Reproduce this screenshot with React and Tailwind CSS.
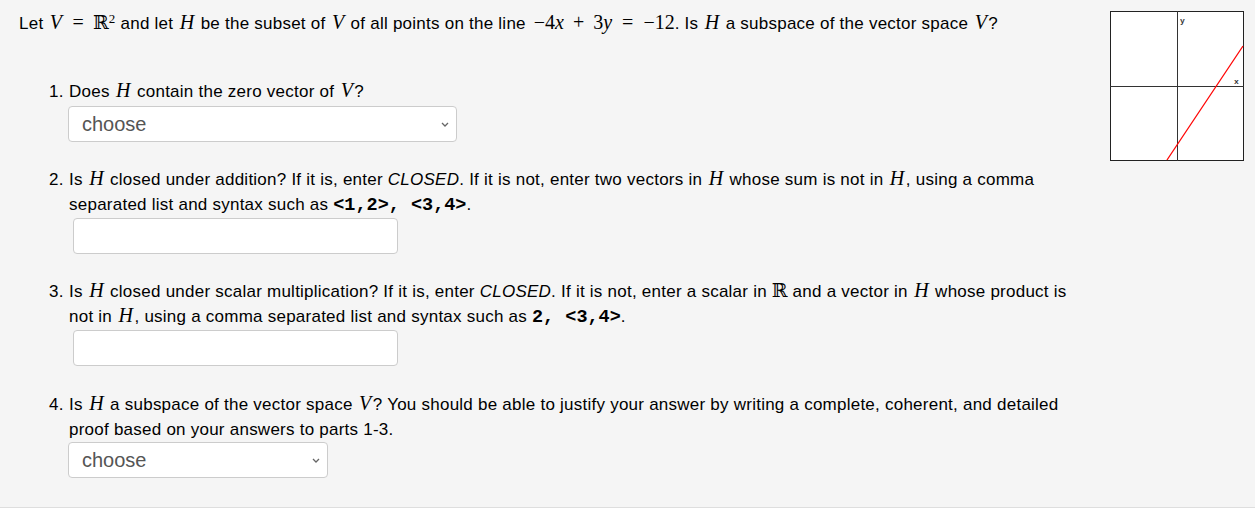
import React from 'react';

const serif = { fontFamily: '"Liberation Serif", "DejaVu Serif", serif' };

const M = ({ children }) => (
  <span className="italic text-[20px] leading-[0] px-[1.5px] tracking-normal" style={serif}>{children}</span>
);

const R = () => (
  <span className="text-[19px] leading-[0] tracking-normal" style={{ fontFamily: '"DejaVu Serif", serif' }}>ℝ</span>
);

const Code = ({ children }) => (
  <span className="text-[18.5px] leading-[0] font-semibold whitespace-pre tracking-normal" style={{ fontFamily: '"Liberation Mono", monospace' }}>{children}</span>
);

const Chevron = () => (
  <svg width="10" height="10" viewBox="0 0 10 10" className="text-[#666]">
    <path d="M2 4 L5 7 L8 4" fill="none" stroke="currentColor" strokeWidth="1.3" />
  </svg>
);

const Select = ({ width }) => (
  <div className={`${width} h-[36px] bg-white border border-[#ccc] rounded-[4px] flex items-center justify-between pl-[13px] pr-[6px]`}>
    <span className="text-[20px] text-[#555] tracking-normal">choose</span>
    <Chevron />
  </div>
);

const Input = () => (
  <div className="w-[325px] h-[36px] ml-[4px] mt-[1px] bg-white border border-[#ccc] rounded-[4px]" />
);

const Item = ({ n, children, field }) => (
  <div className="flex">
    <span className="w-[20px] shrink-0">{n}.</span>
    <div className="flex-1">
      <div className="whitespace-nowrap">{children}</div>
      {field}
    </div>
  </div>
);

const Graph = () => (
  <svg width="134" height="150" viewBox="0 0 134 150" className="shrink-0">
    <rect x="0.5" y="0.5" width="133" height="149" fill="white" stroke="#222" />
    <line x1="67.5" y1="0" x2="67.5" y2="150" stroke="#333" />
    <line x1="0" y1="75.5" x2="134" y2="75.5" stroke="#333" />
    <line x1="57" y1="149" x2="133" y2="35" stroke="red" strokeWidth="1.3" />
    <text x="70" y="12" fontSize="8" fontWeight="bold" fontFamily="Liberation Mono" fill="#333">y</text>
    <text x="124" y="73" fontSize="8" fontWeight="bold" fontFamily="Liberation Mono" fill="#333">x</text>
  </svg>
);

export default function App() {
  return (
    <div className="h-[508px] bg-[#f5f5f5] border-b border-[#dedede] text-black text-[17px] tracking-[0.24px] leading-[25px]" style={{ fontFamily: '"Liberation Sans", Arial, sans-serif' }}>
      <div className="flex justify-between pt-[11px] pl-[19px] pr-[11px]">
        <div className="w-[1080px]">
          <p className="whitespace-nowrap">
            Let <M>V</M> <span className="text-[20px] leading-[0] px-[4px]" style={serif}>=</span> <R /><sup className="text-[13px] leading-[0]" style={serif}>2</sup> and let <M>H</M> be the subset of <M>V</M> of all points on the line{' '}
            <span className="text-[20px] leading-[0] tracking-normal pl-[3px]" style={serif}>−4<i>x</i> <span className="px-[4px]">+</span> 3<i>y</i> <span className="px-[5px]">=</span> −12</span>. Is <M>H</M> a subspace of the vector space <M>V</M>?
          </p>
          <div className="ml-[30px] mt-[43px] flex flex-col gap-[25px]">
            <Item n="1" field={<Select width="w-[389px] -ml-[1px] mt-[2px]" />}>
              Does <M>H</M> contain the zero vector of <M>V</M>?
            </Item>
            <Item n="2" field={<Input />}>
              Is <M>H</M> closed under addition? If it is, enter <i>CLOSED</i>. If it is not, enter two vectors in <M>H</M> whose sum is not in <M>H</M>, using a comma<br />
              separated list and syntax such as <Code>{'<1,2>, <3,4>'}</Code>.
            </Item>
            <Item n="3" field={<Input />}>
              Is <M>H</M> closed under scalar multiplication? If it is, enter <i>CLOSED</i>. If it is not, enter a scalar in <R /> and a vector in <M>H</M> whose product is<br />
              not in <M>H</M>, using a comma separated list and syntax such as <Code>{'2, <3,4>'}</Code>.
            </Item>
            <div className="pt-[1px]">
              <Item n="4" field={<Select width="w-[260px] -ml-[1px]" />}>
                Is <M>H</M> a subspace of the vector space <M>V</M>? You should be able to justify your answer by writing a complete, coherent, and detailed<br />
                proof based on your answers to parts 1-3.
              </Item>
            </div>
          </div>
        </div>
        <Graph />
      </div>
    </div>
  );
}
